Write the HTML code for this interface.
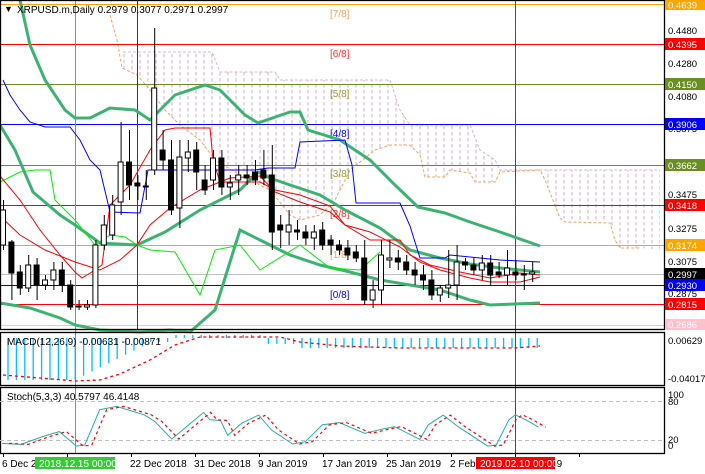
<!DOCTYPE html>
<html><head><meta charset="utf-8"><style>
html,body{margin:0;padding:0;background:#fff;}
svg{display:block;font-family:"Liberation Sans",sans-serif;font-size:9px;}
</style></head><body>
<svg id="s" width="705" height="474" viewBox="0 0 705 474" xmlns="http://www.w3.org/2000/svg">
<defs>
<pattern id="pd" width="8" height="6" patternUnits="userSpaceOnUse">
<line x1="4" y1="0" x2="4" y2="3.5" stroke="#cfb0cc" stroke-width="1"/>
</pattern>
</defs>
<rect width="705" height="474" fill="#fff"/>
<polygon fill="url(#pd)" points="123,52 212,52 220,72 275,72 280,80 390,80 400,110 410,125 470,125 480,150 495,160 500,170 660,170 660,250 640,248 620,248 610,223 560,218 545,180 540,170 500,172 495,182 475,182 470,173 450,170 445,177 425,177 420,155 410,145 390,145 375,150 350,170 335,200 320,215 300,220 290,215 270,190 240,175 215,160 200,140 180,125 165,110 150,90 137,75 123,68"/>
<polyline fill="none" stroke="#d4b8d0" stroke-dasharray="3,2" points="123,52 212,52 220,72 275,72 280,80 390,80 400,110 410,125 470,125 480,150 495,160 500,170 660,170"/>
<polyline fill="none" stroke="#f4a460" stroke-dasharray="3,2" points="110,15 117,40 122,68 137,75 150,90 165,110 180,125 200,140 215,160 240,175 270,190 290,215 300,220 320,215 335,200 350,170 375,150 390,145 410,145 420,155 425,177 445,177 450,170 470,173 475,182 495,182 500,172 540,170 545,180 560,218 565,222 610,223 615,240 620,248 640,248"/>
<g stroke-width="1">
<line x1="0" y1="4.5" x2="664" y2="4.5" stroke="#ffa500"/>
<line x1="0" y1="44.5" x2="664" y2="44.5" stroke="#ff0000"/>
<line x1="0" y1="84.5" x2="664" y2="84.5" stroke="#6b8e23"/>
<line x1="0" y1="124.5" x2="664" y2="124.5" stroke="#0000ff"/>
<line x1="0" y1="165.5" x2="664" y2="165.5" stroke="#6b8e23"/>
<line x1="0" y1="205.5" x2="664" y2="205.5" stroke="#ff0000"/>
<line x1="0" y1="245.5" x2="664" y2="245.5" stroke="#ffa500"/>
<line x1="0" y1="274.5" x2="664" y2="274.5" stroke="#c0c0c0"/>
<line x1="0" y1="285.5" x2="664" y2="285.5" stroke="#0000ff"/>
<line x1="0" y1="304.5" x2="664" y2="304.5" stroke="#ff0000"/>
<line x1="0" y1="325.5" x2="664" y2="325.5" stroke="#ffc0cb"/>
</g>
<g font-size="10">
<text x="330" y="17" fill="#f4a460">[7/8]</text>
<text x="330" y="57" fill="#ff3030">[6/8]</text>
<text x="330" y="97" fill="#9a9a40">[5/8]</text>
<text x="330" y="137" fill="#0000ff">[4/8]</text>
<text x="330" y="177" fill="#9a9a40">[3/8]</text>
<text x="330" y="217" fill="#ff3030">[2/8]</text>
<text x="330" y="258" fill="#f4a460">[1/8]</text>
<text x="330" y="298" fill="#0000ff">[0/8]</text>
</g>
<line x1="75.5" y1="0" x2="75.5" y2="453" stroke="#32cd32"/>
<line x1="137.5" y1="0" x2="137.5" y2="330" stroke="#8b1a1a"/>
<line x1="515.5" y1="0" x2="515.5" y2="453" stroke="#ff0000"/>
<g fill="none" stroke="#3cb371" stroke-width="3">
<polyline points="20,0 30,45 45,80 65,110 75,118 90,118 110,108 135,110 150,120 175,95 205,85 220,90 245,115 258,123 290,112 300,112 308,130 340,140 370,160 395,185 418,207 445,213 470,222 500,232 540,246"/>
<polyline points="0,125 15,150 33,192 60,215 75,225 100,243 137,245 165,232 200,210 240,190 258,172 270,178 290,185 320,195 345,210 380,228 410,250 440,258 470,264 500,268 540,272"/>
<polyline points="0,303 30,308 60,318 75,325 100,330 140,332 170,330 190,332 215,310 240,230 260,240 290,255 320,265 350,272 380,280 410,285 440,290 470,300 490,305 540,303"/>
</g>
<polyline fill="none" stroke="#00ee00" points="0,182 20,172 35,170 50,170 55,200 75,220 95,245 110,235 125,237 137,245 150,250 175,252 200,295 215,250 240,245 260,270 300,245 330,268 360,270 380,252"/>
<polyline fill="none" stroke="#ff0000" points="0,176 20,200 40,230 60,255 75,272 82,278 95,270 102,265 110,205 130,185 150,150 165,130 175,128 210,128 213,160 220,182 260,182 275,190 300,195 330,206 345,225 370,240 400,240 410,255 430,265 460,272 490,278 520,273 540,275"/>
<polyline fill="none" stroke="#ff0000" points="0,216 20,235 45,250 75,262 100,270 120,260 137,245 150,225 170,208 200,190 230,178 260,176 275,192 300,202 330,212 345,225 370,232 400,247 420,262 440,270 470,278 490,282 520,282 540,277"/>
<polyline fill="none" stroke="#0000ff" points="3,80 10,95 20,110 30,122 45,127 70,127 80,140 90,160 100,170 110,212 140,213 148,170 255,170 268,168 295,168 300,142 345,140 352,165 356,203 375,203 400,203 410,226 420,258 445,258 450,255 500,260 540,262"/>
<g id="candles"></g>
<text x="4" y="12" font-size="9">▼</text>
<text x="17" y="13" font-size="10">XRPUSD.m,Daily  0.2979 0.3077 0.2971 0.2997</text>
<g fill="none" stroke="#000" stroke-width="1.3">
<rect x="0.5" y="0.5" width="664" height="329"/>
<rect x="0.5" y="332.5" width="664" height="53"/>
<rect x="0.5" y="387.5" width="664" height="66"/>
</g>
<g id="macd"></g>
<text x="7" y="345" font-size="10">MACD(12,26,9) -0.00631 -0.00871</text>
<line x1="0" y1="401.5" x2="664" y2="401.5" stroke="#c0c0c0" stroke-dasharray="4,3"/>
<line x1="0" y1="440.5" x2="664" y2="440.5" stroke="#c0c0c0" stroke-dasharray="4,3"/>
<g id="stoch"></g>
<text x="7" y="400" font-size="10">Stoch(5,3,3) 40.5797 46.4148</text>
<g font-size="9.5">
<rect x="665" y="0" width="40" height="10" fill="#ffa500"/><text x="668" y="8.5" fill="#fff">0.4639</text>
<text x="668" y="34" fill="#000">0.4480</text>
<rect x="665" y="38" width="40" height="12" fill="#ff0000"/><text x="668" y="48" fill="#fff">0.4395</text>
<text x="668" y="67" fill="#000">0.4280</text>
<rect x="665" y="78" width="40" height="12" fill="#6b8e23"/><text x="668" y="88" fill="#fff">0.4150</text>
<text x="668" y="100" fill="#000">0.4080</text>
<text x="668" y="132" fill="#000">0.3875</text>
<rect x="665" y="118" width="40" height="12" fill="#0000ff"/><text x="668" y="128" fill="#fff">0.3906</text>
<rect x="665" y="159" width="40" height="12" fill="#6b8e23"/><text x="668" y="169" fill="#fff">0.3662</text>
<text x="668" y="198" fill="#000">0.3475</text>
<rect x="665" y="199" width="40" height="12" fill="#ff0000"/><text x="668" y="209" fill="#fff">0.3418</text>
<text x="668" y="232" fill="#000">0.3275</text>
<rect x="665" y="239" width="40" height="12" fill="#ffa500"/><text x="668" y="249" fill="#fff">0.3174</text>
<text x="668" y="265" fill="#000">0.3075</text>
<text x="668" y="297" fill="#000">0.2875</text>
<rect x="665" y="268" width="40" height="12" fill="#000"/><text x="668" y="278" fill="#fff">0.2997</text>
<rect x="665" y="279" width="40" height="12" fill="#0000ff"/><text x="668" y="289" fill="#fff">0.2930</text>
<rect x="665" y="298" width="40" height="12" fill="#ff0000"/><text x="668" y="308" fill="#fff">0.2815</text>
<rect x="665" y="319" width="40" height="11" fill="#ffc0cb"/><text x="668" y="328" fill="#fff">0.2686</text>
<text x="668" y="344" fill="#000">0.00629</text>
<text x="668" y="382" fill="#000">-0.04017</text>
<text x="668" y="398" fill="#000">100</text>
<text x="668" y="405" fill="#000">80</text>
<text x="668" y="443" fill="#000">20</text>
<text x="668" y="449" fill="#000">0</text>
</g>
<g stroke="#000">
<line x1="3.5" y1="453" x2="3.5" y2="457"/><line x1="67.5" y1="453" x2="67.5" y2="457"/><line x1="131.5" y1="453" x2="131.5" y2="457"/><line x1="195.5" y1="453" x2="195.5" y2="457"/><line x1="259.5" y1="453" x2="259.5" y2="457"/><line x1="323.5" y1="453" x2="323.5" y2="457"/><line x1="387.5" y1="453" x2="387.5" y2="457"/><line x1="451.5" y1="453" x2="451.5" y2="457"/><line x1="515.5" y1="453" x2="515.5" y2="457"/><line x1="579.5" y1="453" x2="579.5" y2="457"/>
</g>
<g font-size="10">
<text x="2" y="467">6 Dec 2018</text>
<text x="130" y="467">22 Dec 2018</text>
<text x="194" y="467">31 Dec 2018</text>
<text x="258" y="467">9 Jan 2019</text>
<text x="322" y="467">17 Jan 2019</text>
<text x="386" y="467">25 Jan 2019</text>
<text x="450" y="467">2 Feb 2019</text>
<text x="540" y="467">2019</text>
<rect x="35" y="457" width="80" height="12" fill="#32cd32"/><text x="39" y="467" fill="#fff">2018.12.15 00:00</text>
<rect x="476" y="457" width="79" height="12" fill="#ff0000"/><text x="480" y="467" fill="#fff">2019.02.10 00:00</text>
</g>
</svg>
<script>
(function(){
var NS="http://www.w3.org/2000/svg";
function el(p,t,a){var e=document.createElementNS(NS,t);for(var k in a)e.setAttribute(k,a[k]);p.appendChild(e);return e;}
var C=[[245,210,200,250],[242,273,240,300],[272,288,265,295],[288,265,255,292],[265,285,258,300],[285,280,275,290],[280,270,262,290],[270,285,262,292],[285,307,280,310],[306,306,300,310],[307,305,300,310],[305,245,240,308],[245,225,215,250],[235,205,195,240],[202,162,122,215],[162,185,130,200],[183,186,175,200],[186,186,170,200],[170,88,28,175],[150,160,130,170],[160,210,140,215],[208,157,140,228],[158,152,140,172],[150,172,142,190],[180,190,165,195],[180,158,150,190],[158,187,150,195],[187,183,175,200],[180,175,165,195],[175,178,165,185],[172,180,160,185],[170,178,150,185],[175,232,145,250],[225,230,215,248],[232,225,210,245],[230,232,220,240],[232,238,225,245],[238,232,225,250],[230,245,222,250],[240,245,235,255],[245,250,240,255],[248,255,240,260],[252,258,245,262],[258,300,240,305],[300,290,280,308],[290,255,240,305],[260,258,240,268],[258,262,250,270],[262,270,255,275],[270,275,262,285],[275,280,265,290],[280,295,270,300],[295,288,285,302],[288,285,250,298],[285,262,245,300],[262,265,258,270],[265,270,258,275],[270,263,255,280],[263,275,255,285],[272,275,262,278],[275,268,250,285],[272,275,260,280],[275,274,265,290],[274,272,262,282]];
var g=document.getElementById("candles");
var x0=3,dx=8.4;
for(var i=0;i<C.length;i++){var c=C[i],x=x0+i*dx,o=c[0],cl=c[1];
el(g,"line",{x1:x+0.5,x2:x+0.5,y1:c[2],y2:c[3],stroke:"#000"});
var ty=Math.min(o,cl),h=Math.max(1,Math.abs(o-cl));
el(g,"rect",{x:x-2.5,y:ty,width:5,height:h,fill:cl<o?"#fff":"#000",stroke:"#000"});}
var m=document.getElementById("macd");var z=338;
function hv(x){if(x<75)return 42;if(x<150)return 42-(x-75)*0.5;if(x<170)return 4;if(x<265)return -3;if(x<300)return 6;return 10;}
for(var x=8;x<=540;x+=8.4){var v=hv(x);if(v>=0)el(m,"line",{x1:x,x2:x,y1:z,y2:z+v,stroke:"#00bfff","stroke-width":1.3});else el(m,"line",{x1:x,x2:x,y1:z+v,y2:z,stroke:"#00bfff","stroke-width":1.3});}
el(m,"polyline",{points:"3,375 40,378 75,381 100,380 120,374 150,360 175,345 200,337 280,337 300,342 340,346 400,348 515,348 540,346",fill:"none",stroke:"#ff0000","stroke-dasharray":"3,3","stroke-width":1.3});
var s=document.getElementById("stoch");
var T=[[5,340],[50,343],[100,320],[140,305],[180,348],[200,345],[235,240],[275,230],[340,255],[365,275],[405,327],[440,290],[480,248],[495,270],[520,272],[537,316],[570,280],[610,256],[640,300],[690,342],[720,335],[760,285],[800,278],[860,310],[900,298],[930,290],[990,328],[1010,285],[1045,256],[1080,290],[1150,348],[1170,345],[1200,270],[1215,255],[1240,270],[1270,292]];
function mp(p,d){return ((p[0]/2.358)+d).toFixed(1)+","+(401+(p[1]-214)/116*39).toFixed(1);}
el(s,"polyline",{points:T.map(function(p){return mp(p,0)}).join(" "),fill:"none",stroke:"#20b2aa"});
el(s,"polyline",{points:T.map(function(p){return mp(p,7)}).join(" "),fill:"none",stroke:"#ff0000","stroke-dasharray":"3,3","stroke-width":1.2});
})();
</script>
</body></html>
